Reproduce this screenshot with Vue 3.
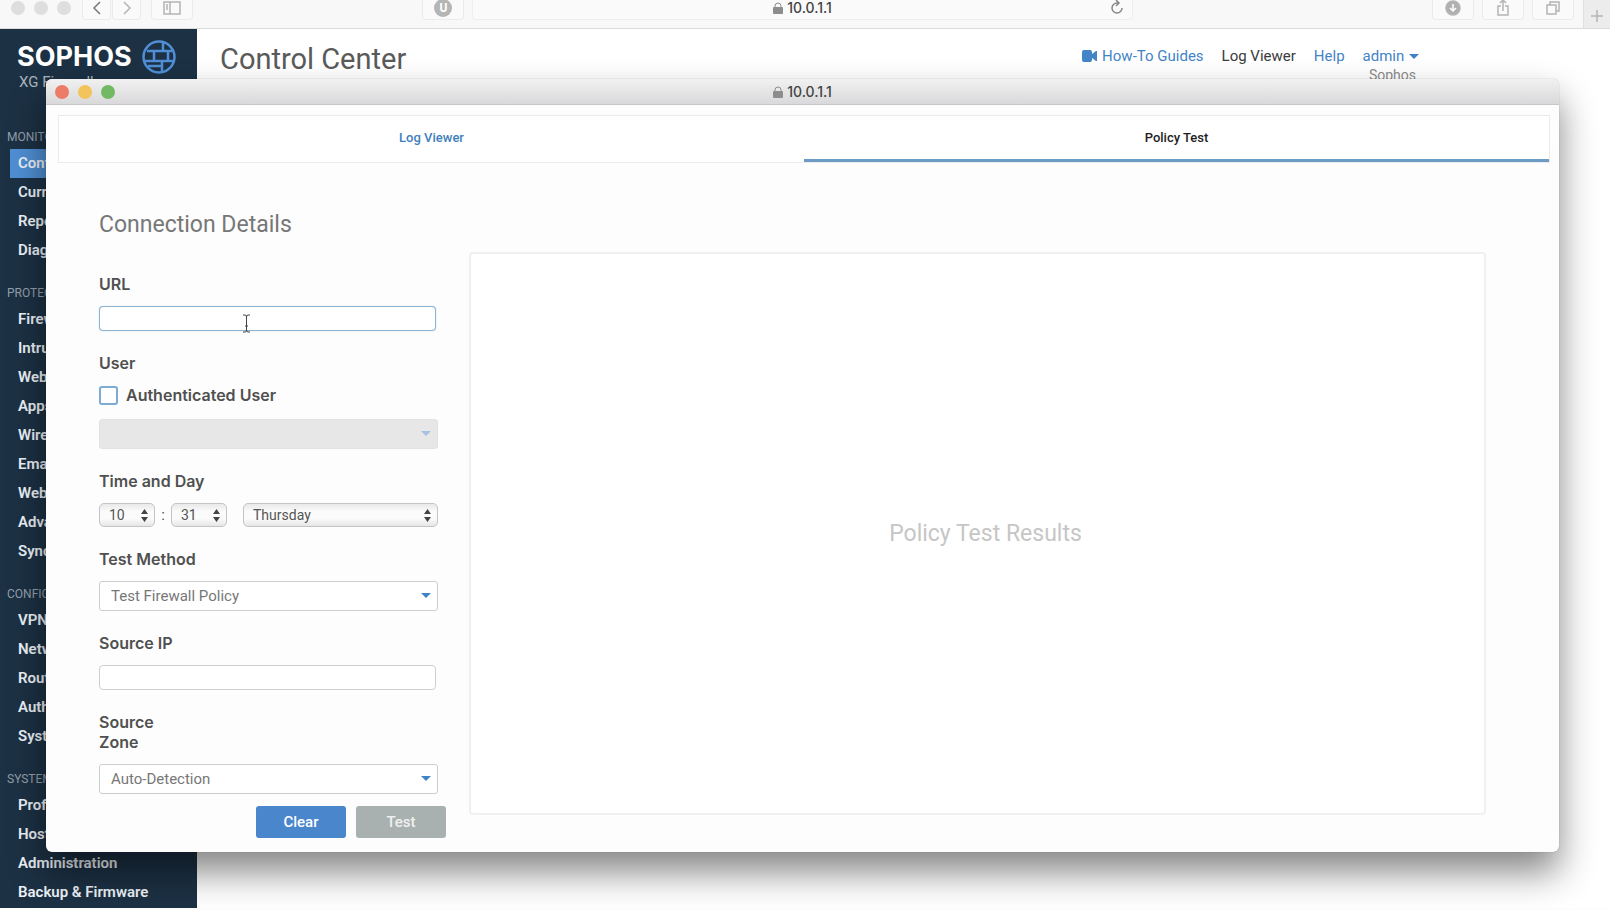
<template>
  <div class="desktop">
    <div class="toolbar">
      <div class="lights muted"><i></i><i></i><i></i></div>
      <div class="nav-buttons">
        <button type="button" class="tool narrow dark" aria-label="Back">
          <svg width="12" height="16" viewBox="0 0 12 16"><path d="M9 2 3 8l6 6" /></svg>
        </button>
        <button type="button" class="tool narrow" aria-label="Forward">
          <svg width="12" height="16" viewBox="0 0 12 16"><path d="m3 2 6 6-6 6" /></svg>
        </button>
      </div>
      <button type="button" class="tool" aria-label="Show sidebar">
        <svg width="18" height="14" viewBox="0 0 18 14"><path d="M1 1h16v12H1zM7 1v12M3 4h2M3 6h2M3 8h2" /></svg>
      </button>
      <span class="spacer"></span>
      <button type="button" class="tool shield" aria-label="Extension"><span>U</span></button>
      <div class="address">
        <LockIcon />
        <span>10.0.1.1</span>
        <button type="button" class="reload" aria-label="Reload">
          <svg width="14" height="16" viewBox="0 0 14 16"><path d="M8 3H7a5 5 0 1 0 5 5M6 0l3 3-3 3" /></svg>
        </button>
      </div>
      <span class="spacer wide"></span>
      <div class="tool-group">
        <button type="button" class="tool" aria-label="Downloads">
          <svg width="16" height="16" viewBox="0 0 16 16">
            <circle class="solid" cx="8" cy="8" r="7" />
            <path class="knock" d="M8 4v7M5 8l3 3 3-3" />
          </svg>
        </button>
        <button type="button" class="tool" aria-label="Share">
          <svg width="14" height="18" viewBox="0 0 14 18"><path d="M5 7H2v9h10V7H9M7 12V2M4 4l3-3 3 3" /></svg>
        </button>
        <button type="button" class="tool" aria-label="Show all tabs">
          <svg width="16" height="16" viewBox="0 0 16 16"><path d="M2 5h9v9H2zM5 5V2h9v9h-3" /></svg>
        </button>
      </div>
      <button type="button" class="new-tab" aria-label="New tab">
        <svg width="14" height="14" viewBox="0 0 14 14"><path d="M7 1v12M1 7h12" /></svg>
      </button>
    </div>

    <div class="page">
      <aside class="sidebar">
        <div class="brand">
          <span class="brand-name">SOPHOS</span>
          <svg width="34" height="34" viewBox="0 0 34 34">
            <circle cx="17" cy="17" r="15.500" />
            <path d="M5 11h25M2 21h23M12 11v10M21 3v8M26 11v10h5M20 21v11M6 26h14" />
          </svg>
        </div>
        <div class="product">XG Firewall</div>
        <nav>
          <section v-for="group in menu" :key="group.title" class="menu-group">
            <h2>{{ group.title }}</h2>
            <a
              v-for="item in group.items"
              :key="item"
              href="#"
              :class="{ active: item === 'Control' }"
            >{{ item }}</a>
          </section>
        </nav>
      </aside>

      <header class="header">
        <h1>Control Center</h1>
        <nav class="links">
          <a href="#" class="guides">
            <svg width="15" height="12" viewBox="0 0 15 12"><path d="M2 0h6q2 0 2 2v2l4-3h1v10h-1l-4-3v2q0 2-2 2H2q-2 0-2-2V2q0-2 2-2z" /></svg>
            How-To Guides
          </a>
          <a href="#" class="plain">Log Viewer</a>
          <a href="#">Help</a>
          <div class="account">
            <a href="#">admin <i class="caret"></i></a>
            <span>Sophos</span>
          </div>
        </nav>
      </header>
    </div>

    <div class="window">
      <div class="titlebar">
        <div class="lights"><i></i><i></i><i></i></div>
        <div class="title"><LockIcon /><span>10.0.1.1</span></div>
      </div>

      <div class="tabs">
        <button
          v-for="tab in tabs"
          :key="tab"
          type="button"
          :class="{ selected: tab === activeTab }"
          @click="activeTab = tab"
        >{{ tab }}</button>
      </div>

      <div class="content">
        <form class="details" @submit.prevent>
          <h2>Connection Details</h2>

          <div class="field">
            <label for="url">URL</label>
            <input id="url" v-model="form.url" type="text" class="text focused" />
            <svg class="pointer" width="9" height="19" viewBox="0 0 9 19">
              <path d="M1 1h2q1.500 0 1.500 2 0-2 1.500-2h2M4.500 3v13M1 18h2q1.500 0 1.500-2 0 2 1.500 2h2M3 12h3" />
            </svg>
          </div>

          <div class="field">
            <span class="caption">User</span>
            <div class="check">
              <input id="auth" v-model="form.authenticated" type="checkbox" />
              <label for="auth">Authenticated User</label>
            </div>
            <div class="select user">
              <select aria-label="User" :disabled="!form.authenticated"><option></option></select>
              <i class="caret"></i>
            </div>
          </div>

          <div class="field">
            <span class="caption">Time and Day</span>
            <div class="time">
              <div class="mac-select short">
                <select v-model="form.hour" aria-label="Hour"><option>10</option><option>11</option></select>
                <StepArrows />
              </div>
              <span class="colon">:</span>
              <div class="mac-select short">
                <select v-model="form.minute" aria-label="Minute"><option>31</option><option>32</option></select>
                <StepArrows />
              </div>
              <div class="mac-select day">
                <select v-model="form.day" aria-label="Day">
                  <option v-for="day in days" :key="day">{{ day }}</option>
                </select>
                <StepArrows />
              </div>
            </div>
          </div>

          <div class="field">
            <label for="method">Test Method</label>
            <div class="select">
              <select id="method"><option>Test Firewall Policy</option></select>
              <i class="caret"></i>
            </div>
          </div>

          <div class="field">
            <label for="source-ip">Source IP</label>
            <input id="source-ip" v-model="form.sourceIp" type="text" class="text" />
          </div>

          <div class="field">
            <label for="zone" class="narrow-label">Source Zone</label>
            <div class="select">
              <select id="zone"><option>Auto-Detection</option></select>
              <i class="caret"></i>
            </div>
          </div>

          <div class="actions">
            <button type="button" class="clear" @click="clearForm">Clear</button>
            <button type="submit" :disabled="!form.url">Test</button>
          </div>
        </form>

        <div class="results">Policy Test Results</div>
      </div>
    </div>
  </div>
</template>

<script setup>
import { h, reactive, ref } from 'vue'

const LockIcon = () =>
  h('svg', { width: 10, height: 12, viewBox: '0 0 10 12', fill: '#8d8d8d' }, [
    h('path', { d: 'M2 5V4a3 3 0 0 1 6 0v1', fill: 'none', stroke: '#8d8d8d' }),
    h('rect', { x: 0, y: 5, width: 10, height: 7, rx: 1 }),
  ])

const StepArrows = () =>
  h('svg', { width: 7, height: 13, viewBox: '0 0 7 13', fill: '#444' }, [
    h('path', { d: 'M3.500 0 7 5H0zM3.500 13 0 8h7z' }),
  ])

const menu = [
  {
    title: 'MONITOR',
    items: ['Control', 'Current', 'Reports', 'Diagnostics'],
  },
  {
    title: 'PROTECT',
    items: [
      'Firewall',
      'Intrusion',
      'Web',
      'Apps',
      'Wireless',
      'Email',
      'Web Server',
      'Advanced',
      'Sync',
    ],
  },
  {
    title: 'CONFIGURE',
    items: ['VPN', 'Network', 'Routing', 'Authentication', 'System'],
  },
  {
    title: 'SYSTEM',
    items: ['Profiles', 'Hosts', 'Administration', 'Backup & Firmware'],
  },
]

const tabs = ['Log Viewer', 'Policy Test']
const activeTab = ref('Policy Test')
const days = ['Monday', 'Tuesday', 'Wednesday', 'Thursday', 'Friday', 'Saturday', 'Sunday']

const form = reactive({
  url: '',
  authenticated: false,
  hour: '10',
  minute: '31',
  day: 'Thursday',
  sourceIp: '',
})

function clearForm() {
  form.url = ''
  form.sourceIp = ''
  form.authenticated = false
}
</script>

<style>
body {
  background: #fdfdfd;
  overflow: hidden;
}
</style>

<style scoped>
* {
  box-sizing: border-box;
}

.desktop {
  position: relative;
  display: flex;
  flex-direction: column;
  height: 100vh;
  overflow: hidden;
  font-family: Roboto, "Liberation Sans", sans-serif;
  color: #4a4a4a;
}

h1,
h2 {
  margin: 0;
  font-weight: 400;
}

button,
input,
select {
  font-family: inherit;
  margin: 0;
}

a {
  text-decoration: none;
}

.toolbar {
  flex: none;
  display: flex;
  align-items: flex-start;
  height: 29px;
  padding-left: 11px;
  background: #f8f8f8;
  border-bottom: 1px solid #dcdcdc;
}

.toolbar button svg {
  fill: none;
  stroke: #b4b4b4;
  stroke-width: 1.5;
}

.lights {
  display: flex;
  gap: 9px;
}

.lights i {
  width: 14px;
  height: 14px;
  border-radius: 50%;
  background: #ec7c68;
}

.lights i:nth-child(2) {
  background: #f3c35c;
}

.lights i:nth-child(3) {
  background: #71b963;
}

.lights.muted {
  margin: 1px 11px 0 0;
}

.lights.muted i {
  background: #dedede;
}

.nav-buttons {
  display: flex;
  gap: 1px;
  margin-right: 10px;
}

.tool {
  display: flex;
  align-items: center;
  justify-content: center;
  width: 42px;
  height: 20px;
  padding: 0 0 4px;
  background: #fafafa;
  border: 1px solid #ebebeb;
  border-top: 0;
  border-radius: 0 0 4px 4px;
}

.tool.narrow {
  width: 29px;
}

.toolbar .dark svg {
  stroke: #777;
}

.spacer {
  flex: 23 1 0;
}

.spacer.wide {
  flex: 30 1 0;
}

.shield {
  margin-right: 8px;
}

.shield span {
  width: 18px;
  height: 18px;
  border-radius: 50%;
  background: #b5b5b5;
  color: #fff;
  font-size: 12px;
  font-weight: 700;
  line-height: 18px;
}

.address {
  position: relative;
  flex: 66 1 0;
  display: flex;
  align-items: center;
  justify-content: center;
  gap: 4px;
  height: 20px;
  padding-bottom: 3px;
  background: #fafafa;
  border: 1px solid #eee;
  border-top: 0;
  border-radius: 0 0 4px 4px;
}

.address span,
.title span {
  font-family: Inter, sans-serif;
  font-size: 14px;
  font-weight: 500;
  line-height: 16px;
  color: #444;
}

.reload {
  position: absolute;
  right: 8px;
  top: 0;
  padding: 0;
  border: 0;
  background: none;
  line-height: 0;
}

.toolbar .reload svg {
  stroke: #888;
}

.tool-group {
  display: flex;
  gap: 8px;
  margin-right: 9px;
}

.toolbar .solid {
  fill: #b0b0b0;
}

.toolbar .knock {
  stroke: #fff;
}

.new-tab {
  display: flex;
  align-items: center;
  justify-content: center;
  width: 27px;
  height: 28px;
  padding: 4px 0 0;
  border: 0;
  border-left: 1px solid #e0e0e0;
  background: #ececec;
}

.page {
  flex: 1;
  display: flex;
  min-height: 0;
  padding-bottom: 2px;
}

.sidebar {
  flex: none;
  width: 197px;
  overflow: hidden;
  background: #1c3144;
  white-space: nowrap;
}

.brand {
  display: flex;
  align-items: center;
  gap: 10px;
  height: 42px;
  padding: 14px 0 0 17px;
}

.brand-name {
  font-family: Inter, sans-serif;
  font-size: 27px;
  font-weight: 700;
  line-height: 34px;
  color: #fff;
}

.brand svg {
  fill: none;
  stroke: #508fd6;
  stroke-width: 2.5;
}

.product {
  margin-bottom: 32px;
  padding-left: 19px;
  font-size: 15px;
  line-height: 22px;
  color: #aab4be;
}

.menu-group {
  margin-bottom: 16px;
}

.menu-group h2 {
  padding-left: 7px;
  font-size: 12px;
  line-height: 24px;
  color: #939fab;
}

.menu-group a {
  display: block;
  margin-left: 10px;
  padding-left: 8px;
  font-size: 15px;
  font-weight: 600;
  line-height: 29px;
  color: #eef3f8;
}

.menu-group a.active {
  background: #4f8fd4;
}

.header {
  flex: 1;
  display: flex;
  align-items: flex-start;
  justify-content: space-between;
  padding: 12px 191px 0 23px;
  background: #fff;
}

h1 {
  font-size: 29px;
  line-height: 36px;
  color: #5a5a5a;
}

.links {
  display: flex;
  gap: 18px;
  padding-top: 5px;
  font-size: 15px;
  line-height: 20px;
}

.links a {
  color: #4384c6;
}

.links a.plain {
  color: #3c3c3c;
}

.guides svg {
  margin-right: 1px;
  fill: #4384c6;
  vertical-align: -1px;
}

.account {
  display: flex;
  flex-direction: column;
  align-items: flex-end;
}

.account span {
  padding-right: 3px;
  font-size: 14px;
  line-height: 18px;
  color: #8a8a8a;
}

.caret {
  display: inline-block;
  border: 5px solid transparent;
  border-top-color: #3f82c8;
  border-bottom: 0;
}

.account .caret {
  margin-left: 1px;
  vertical-align: 2px;
}

.window {
  position: absolute;
  left: 46px;
  right: 51px;
  top: 79px;
  background: #fdfdfd;
  border-radius: 6px;
  box-shadow: 0 20px 36px rgba(0, 0, 0, 0.48), 0 0 1px rgba(0, 0, 0, 0.4);
}

.titlebar {
  display: grid;
  grid-template-columns: 1fr auto 1fr;
  align-items: center;
  height: 26px;
  padding: 0 9px;
  background: linear-gradient(#f1f1f1, #d9d9db);
  border-bottom: 1px solid #c8c8c8;
  border-radius: 6px 6px 0 0;
}

.title {
  display: flex;
  align-items: center;
  gap: 4px;
}

.tabs {
  display: flex;
  margin: 10px 9px 0 12px;
  background: #fff;
  border: 1px solid #ebebeb;
}

.tabs button {
  flex: 1;
  height: 46px;
  padding: 0;
  background: none;
  border: 0;
  border-bottom: 3px solid transparent;
  font-size: 13px;
  font-weight: 500;
  color: #3f80bd;
}

.tabs button.selected {
  border-bottom-color: #6c9bc5;
  color: #1e1e1e;
}

.content {
  display: grid;
  grid-template-columns: 347px 1fr;
  gap: 23px;
  padding: 48px 73px 14px 53px;
}

.details h2 {
  margin-bottom: 35px;
  font-size: 23px;
  line-height: 28px;
  color: #777;
}

.field {
  position: relative;
  width: 339px;
  margin-bottom: 22px;
}

.field label,
.caption {
  display: block;
  margin-bottom: 12px;
  font-family: Inter, sans-serif;
  font-size: 16px;
  font-weight: 600;
  line-height: 20px;
  color: #505050;
}

.field .narrow-label {
  width: 80px;
}

.text {
  display: block;
  width: 337px;
  height: 25px;
  padding: 0 8px;
  background: #fff;
  border: 1px solid #cfcfcf;
  border-radius: 4px;
}

.text.focused {
  border-color: #8fb4d2;
  box-shadow: 0 0 1px #8fb4d2;
}

.pointer {
  position: absolute;
  left: 143px;
  top: 40px;
  fill: none;
  stroke: #444;
}

.check {
  display: flex;
  align-items: center;
  gap: 8px;
  margin-bottom: 14px;
}

.check label {
  margin: 0;
}

.check input {
  appearance: none;
  width: 19px;
  height: 19px;
  background: #fff;
  border: 2px solid #7eabd3;
  border-radius: 3px;
}

.check input:checked {
  background: #7eabd3;
}

.select {
  position: relative;
}

.select select {
  appearance: none;
  display: block;
  width: 100%;
  height: 30px;
  padding: 0 28px 0 11px;
  background: #fff;
  border: 1px solid #cdcdcd;
  border-radius: 3px;
  font-size: 15px;
  color: #777;
}

.select select:disabled {
  background: #e7e7e7;
  border-color: #e2e2e2;
  opacity: 1;
}

.select .caret {
  position: absolute;
  right: 7px;
  top: 12px;
  pointer-events: none;
}

.user .caret {
  border-top-color: #a6c4df;
}

.time {
  display: flex;
  align-items: center;
}

.mac-select {
  position: relative;
}

.mac-select select {
  appearance: none;
  display: block;
  width: 100%;
  height: 24px;
  padding: 0 16px 0 9px;
  background: linear-gradient(#e9e9e9, #fbfbfb 35%, #fbfbfb 65%, #e6e6e6);
  border: 1px solid #c4c4c4;
  border-radius: 5px;
  font-size: 14px;
  color: #555;
}

.mac-select svg {
  position: absolute;
  right: 7px;
  top: 6px;
  pointer-events: none;
}

.short {
  width: 56px;
}

.colon {
  width: 16px;
  font-size: 15px;
  line-height: 20px;
  text-align: center;
}

.day {
  flex: 1;
  margin-left: 16px;
}

.actions {
  display: flex;
  justify-content: flex-end;
  gap: 10px;
  margin-top: -10px;
}

.actions button {
  width: 90px;
  height: 32px;
  padding: 0;
  background: #a9b1b0;
  border: 0;
  border-radius: 3px;
  font-size: 15px;
  font-weight: 500;
  color: #eef0f0;
}

.actions .clear {
  background: #4a86cb;
  color: #fff;
}

.results {
  display: flex;
  align-items: center;
  justify-content: center;
  margin: 41px 0 23px;
  padding-left: 16px;
  background: #fff;
  border: 2px solid #f0f0f0;
  border-radius: 4px;
  font-size: 23px;
  line-height: 28px;
  color: #c6c6c6;
}
</style>
